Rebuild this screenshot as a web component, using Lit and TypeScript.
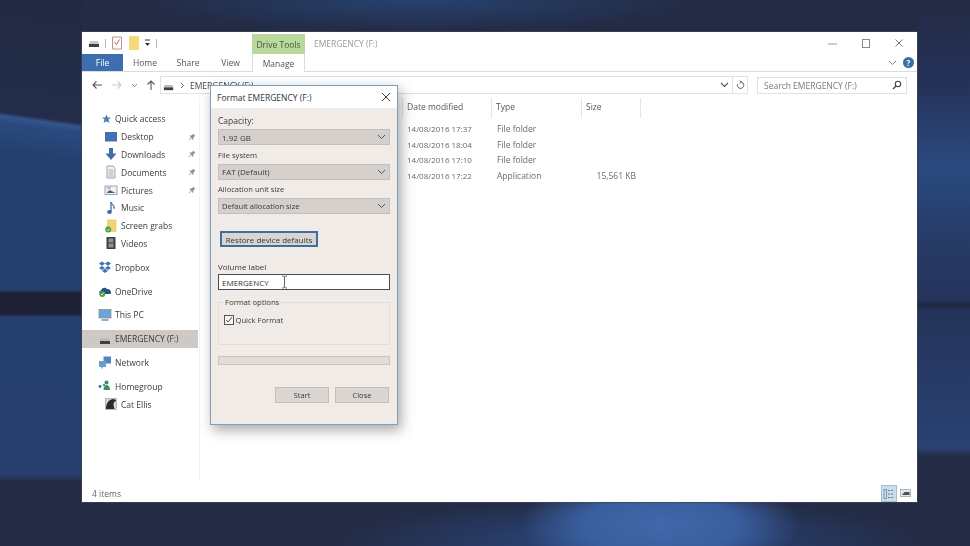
import { css, html, LitElement, svg } from "lit";
import { customElement } from "lit/decorators.js";

type NavItem = { label: string; icon: string; pin?: boolean; indent?: boolean; group?: boolean; selected?: boolean };

const NAV: NavItem[] = [
  { label: "Quick access", icon: "star" },
  { label: "Desktop", icon: "desktop", pin: true, indent: true },
  { label: "Downloads", icon: "download", pin: true, indent: true },
  { label: "Documents", icon: "docs", pin: true, indent: true },
  { label: "Pictures", icon: "pics", pin: true, indent: true },
  { label: "Music", icon: "music", indent: true },
  { label: "Screen grabs", icon: "grabs", indent: true },
  { label: "Videos", icon: "videos", indent: true },
  { label: "Dropbox", icon: "dropbox", group: true },
  { label: "OneDrive", icon: "onedrive", group: true },
  { label: "This PC", icon: "pc", group: true },
  { label: "EMERGENCY (F:)", icon: "drive", group: true, selected: true },
  { label: "Network", icon: "network", group: true },
  { label: "Homegroup", icon: "home", group: true },
  { label: "Cat Ellis", icon: "user", indent: true },
];

const FILES = [
  ["14/08/2016 17:37", "File folder", ""],
  ["14/08/2016 18:04", "File folder", ""],
  ["14/08/2016 17:10", "File folder", ""],
  ["14/08/2016 17:22", "Application", "15,561 KB"],
];

const ICONS: Record<string, unknown> = {
  star: svg`<path d="M8.500 2.500l1.300 3H13l-2.500 2.100L11.500 11 8.500 9.200 5.500 11l1-3.400L4 5.500h3.200z" fill="#4f7fae"/>`,
  desktop: svg`<rect x="1" y="2" width="12" height="9.500" fill="#5a6b80"/><rect x="2" y="3" width="10" height="7.500" fill="#3a74bc"/>`,
  download: svg`<path d="M5 1h4v5.500h3.500L7 13 1.500 6.500H5z" fill="#3f6fa8"/>`,
  docs: svg`<path d="M3 1h6l2 2.500V13H3z" fill="#f2f2f2" stroke="#8a8f96" stroke-width=".8"/><path d="M4.500 5h5M4.500 7h5M4.500 9h5M4.500 11h5" stroke="#9aa0a8" stroke-width=".8"/>`,
  pics: svg`<rect x="1" y="3" width="12" height="8.500" fill="#eef0f2" stroke="#8a929a" stroke-width=".8"/><path d="M2.500 10l3-3 6 3z" fill="#4b5f78"/><path d="M3 5h4" stroke="#7a8ea6"/>`,
  music: svg`<path d="M7 1v9.500" stroke="#3d6fa8" stroke-width="1.300" fill="none"/><path d="M7 1c.6 2.800 3.800 3.400 3.200 6.800" stroke="#3d6fa8" stroke-width="1.100" fill="none"/><ellipse cx="5.500" cy="11" rx="2.400" ry="2" fill="#3d6fa8"/>`,
  grabs: svg`<rect x="3.500" y="1" width="8.500" height="11.500" fill="#f3d36e" stroke="#d8ba5a" stroke-width=".5"/><circle cx="4.200" cy="10.600" r="3" fill="#4aa043"/><path d="M2.800 10.600l1.100 1.100 1.800-2" stroke="#fff" stroke-width=".8" fill="none"/>`,
  videos: svg`<rect x="2.500" y="1" width="9" height="12" fill="#3c3f44"/><rect x="4.500" y="2.500" width="5" height="4" fill="#8d9196"/><rect x="4.500" y="7.500" width="5" height="4" fill="#8d9196"/>`,
  dropbox: svg`<path d="M4 1.500L7 3.600 4 5.700 1 3.600zM10 1.500l3 2.100-3 2.100L7 3.600zM4 5.900L7 8 4 10.100 1 8zM10 5.900L13 8l-3 2.100L7 8zM4 10.800l3-2 3 2-3 2.100z" fill="#3f71ad"/>`,
  onedrive: svg`<path d="M3 10c-2 0-2.600-3 0-3.400C3.600 4 7 2.600 9 5c2.600-.6 5 2.600 3.600 5z" fill="#23537f"/><circle cx="4.300" cy="10" r="3" fill="#4aa043"/><path d="M3 10l1 1 1.700-1.900" stroke="#fff" stroke-width=".8" fill="none"/>`,
  pc: svg`<rect x="1" y="1.500" width="12" height="8.500" fill="#6fa4d6" stroke="#7c8996" stroke-width=".7"/><path d="M3.500 12h7" stroke="#7c8996" stroke-width="1.400"/>`,
  drive: svg`<path d="M3 6.500h8l1 2.500H2z" fill="#b9b9b9"/><rect x="2" y="9" width="10" height="3" fill="#3c3f44"/>`,
  network: svg`<rect x="5.500" y="1.500" width="7.500" height="7" fill="#4f87bd"/><rect x="1" y="6" width="7" height="6" fill="#6a9ccb"/><path d="M4 12v1.500" stroke="#4f6d8c"/>`,
  home: svg`<circle cx="2" cy="7.500" r="1.400" fill="#2e6ea8"/><circle cx="8.500" cy="3.500" r="2" fill="#3f8f5a"/><path d="M5.500 11c0-3.500 1.500-5 3-5s3.500 1.500 3.500 5z" fill="#3f8f5a"/><circle cx="6" cy="6" r="1.100" fill="#2e6ea8"/>`,
  user: svg`<rect x="1.500" y="1.500" width="11" height="11" fill="#d8d4d0" stroke="#8c8c8c" stroke-width=".5"/><path d="M2 12c0-5 2-9 7-10 2 0 3 1 3 2-3 1-3 3-1.500 8z" fill="#2c2a2a"/>`,
};

const icon = (name: string, size = 14) =>
  html`<svg class="ic" width=${size} height=${size} viewBox="0 0 14 14">${ICONS[name]}</svg>`;

const chevron = html`<svg width="9" height="6" viewBox="0 0 9 6"><path d="M1 1l3.500 3.500L8 1" fill="none" stroke="#555" stroke-width="1"/></svg>`;

@customElement("app-root")
export class AppRoot extends LitElement {
  static styles = css`
    :host {
      display: block;
      font-family: "Open Sans", "Liberation Sans", Arial, sans-serif;
      font-size: 8.5px;
      color: #3c3c3c;
    }
    * {
      box-sizing: border-box;
    }
    .ic {
      flex: none;
      display: block;
    }
    .desktop {
      position: relative;
      width: 970px;
      height: 546px;
      overflow: hidden;
      padding: 32px 53px 44px 82px;
      background:
        linear-gradient(180deg, transparent 290px, #1e2033 293px, #1e2033 314px, transparent 317px) 0 0 / 82px 546px no-repeat,
        linear-gradient(180deg, transparent 474px, #232b45 482px) 0 0 / 82px 546px no-repeat,
        linear-gradient(188deg, #222a42 0, #232d49 122px, #34548d 126px, #2a4a7f 132px, #24406f 160px, #233f6e 290px, #273f6c 480px) 0 0 / 82px 546px no-repeat,
        linear-gradient(180deg, #232a44 0, #24325a 85px, #2a4a80 168px, #263c68 235px, #25335a 300px, #20283f 305px, #25335a 311px, #28406f 430px, #2a4272 448px, #232b45 456px) 100% 0 / 53px 546px no-repeat,
        radial-gradient(ellipse 140px 52px at 660px 525px, #4168aa, #3a5f9f 55%, transparent),
        radial-gradient(ellipse 300px 50px at 630px 546px, #2b4a82, transparent),
        radial-gradient(ellipse 280px 32px at 420px 0, #26426f, transparent),
        #232b45;
    }
    .window {
      position: relative;
      width: 835px;
      height: 470px;
      background: #fff;
      display: flex;
      flex-direction: column;
      box-shadow: 0 0 1px 1px rgba(60, 68, 84, 0.75);
      filter: blur(0.35px);
    }
    .title {
      height: 22px;
      display: flex;
      align-items: center;
      flex: none;
    }
    .qat {
      width: 170px;
      display: flex;
      align-items: center;
      padding-left: 6px;
      gap: 4px;
    }
    .qat .sep {
      width: 1px;
      height: 9px;
      background: #b5b5b5;
      margin: 0 1px;
    }
    .qat .folder {
      margin-left: 2px;
    }
    .contextual {
      width: 53px;
      height: 20px;
      margin-top: 2px;
      background: #b9d89b;
      color: #4a5a3a;
      display: flex;
      align-items: center;
      justify-content: center;
    }
    .doc-title {
      margin-left: 9px;
      color: #9a9a9a;
      flex: 1;
    }
    .controls {
      display: flex;
      align-items: center;
      padding-right: 14px;
      gap: 25px;
    }
    .tabs {
      height: 18px;
      flex: none;
      display: flex;
      border-bottom: 1px solid #dcdcdc;
      color: #555;
    }
    .tab {
      display: flex;
      align-items: center;
      justify-content: center;
      height: 17px;
    }
    .tab.file {
      width: 41px;
      background: #3d6fb0;
      color: #fff;
    }
    .tab.home {
      width: 44px;
    }
    .tab.share {
      width: 42px;
    }
    .tab.view {
      width: 43px;
    }
    .tab.manage {
      width: 53px;
      height: 18px;
      background: #fff;
      border-left: 1px solid #dcdcdc;
      border-right: 1px solid #dcdcdc;
    }
    .spacer {
      flex: 1;
    }
    .ribbon-right {
      display: flex;
      align-items: center;
      gap: 6.500px;
      padding-right: 3px;
    }
    .help {
      width: 11px;
      height: 11px;
      border-radius: 50%;
      background: #3a6ea8;
      color: #fff;
      font-size: 8px;
      font-weight: 700;
      display: flex;
      align-items: center;
      justify-content: center;
    }
    .nav {
      height: 26px;
      flex: none;
      display: flex;
      align-items: center;
      padding-left: 9px;
      padding-right: 10px;
    }
    .nav-buttons {
      width: 69px;
      display: flex;
      align-items: center;
      gap: 8px;
    }
    .crumb {
      width: 573px;
      height: 18px;
      border: 1px solid #e2e2e2;
      display: flex;
      align-items: center;
      padding-left: 1px;
      gap: 5px;
      color: #444;
    }
    .crumb .path {
      flex: 1;
    }
    .crumb-end {
      padding-right: 3px;
    }
    .refresh {
      width: 15px;
      height: 18px;
      border: 1px solid #e2e2e2;
      border-left: none;
      display: flex;
      align-items: center;
      justify-content: center;
    }
    .search {
      margin-left: 9px;
      width: 150px;
      height: 17px;
      border: 1px solid #e0e0e0;
      display: flex;
      align-items: center;
      justify-content: space-between;
      padding: 0 4px 0 6px;
      color: #777;
    }
    .main {
      flex: 1;
      display: flex;
      min-height: 0;
    }
    .sidebar {
      width: 116px;
      flex: none;
      padding-top: 12px;
      margin-right: 1px;
    }
    .item {
      height: 17.800px;
      display: flex;
      align-items: center;
      padding-left: 16px;
      gap: 3px;
    }
    .item.indent {
      padding-left: 22px;
    }
    .item.group {
      margin-top: 6px;
    }
    .item.selected {
      background: #cfc9c5;
    }
    .item .label {
      flex: 1;
    }
    .pin {
      margin-right: 2px;
    }
    .list {
      flex: 1;
      border-left: 1px solid #f4f4f4;
    }
    .row {
      display: grid;
      grid-template-columns: 203px 89px 90px 59px;
      height: 15.600px;
      align-items: center;
    }
    .row.head {
      height: 23px;
      align-items: start;
      color: #555;
    }
    .row.head > div {
      height: 20px;
      border-right: 1px solid #e6e6e6;
      padding: 0 0 3px 4px;
      display: flex;
      align-items: center;
    }
    .row.cells > div {
      padding-left: 5px;
      color: #6a6a6a;
    }
    .row.cells .date {
      font-size: 8px;
      padding-left: 4px;
    }
    .row.cells .size {
      text-align: right;
      padding-right: 5px;
    }
    .status {
      height: 21px;
      flex: none;
      display: flex;
      align-items: flex-end;
      padding-left: 10px;
      color: #666;
    }
    .status-text {
      padding-bottom: 3px;
    }
    .views {
      margin-left: auto;
      display: flex;
      align-items: flex-end;
      gap: 3px;
      padding-right: 6px;
    }
    .view-on {
      width: 16px;
      height: 17px;
      background: #c6dfee;
      border: 1px solid #9fc0d4;
      display: flex;
      align-items: center;
      justify-content: center;
    }
    .view-thumb {
      margin-bottom: 5px;
    }
    .dialog {
      position: absolute;
      left: 128px;
      top: 53px;
      width: 188px;
      height: 340px;
      border: 1px solid #7ba1c2;
      background: #f0ebe6;
      box-shadow: 3px 5px 12px rgba(60, 60, 60, 0.45);
      display: flex;
      flex-direction: column;
      color: #3a3a3a;
    }
    .dialog-title {
      height: 22px;
      flex: none;
      background: #fff;
      display: flex;
      align-items: center;
      justify-content: space-between;
      padding: 0 6px;
      color: #333;
    }
    .dialog-body {
      padding: 0 7px;
      display: flex;
      flex-direction: column;
      font-size: 7.600px;
    }
    .field-label {
      height: 14px;
      display: flex;
      align-items: center;
      margin-top: 5px;
    }
    .field-label.capacity {
      font-size: 8.500px;
    }
    .combo {
      height: 16px;
      width: 172px;
      background: #d6d0cc;
      border: 1px solid #c4bfbb;
      display: flex;
      align-items: center;
      justify-content: space-between;
      padding: 0 3px;
      margin-top: 2px;
    }
    .combo + .field-label {
      margin-top: 2.500px;
    }
    .combo .strong {
      font-size: 8px;
    }
    .restore {
      margin-top: 17px;
      margin-left: 2px;
      width: 98px;
      height: 16px;
      background: #d9d5d3;
      border: 2px solid #3e6f9f;
      display: flex;
      align-items: center;
      justify-content: center;
      color: #333;
      font-size: 8px;
    }
    .volume-label {
      margin-top: 13px;
      height: 13px;
      display: flex;
      align-items: center;
      font-size: 8px;
    }
    .volume {
      position: relative;
      margin-top: 1px;
      height: 16px;
      width: 172px;
      background: #fff;
      border: 1.500px solid #4a4f55;
      display: flex;
      align-items: center;
      padding-left: 3px;
      color: #333;
      font-size: 8px;
    }
    .cursor {
      position: absolute;
      left: 62px;
      top: 0;
    }
    .fieldset {
      position: relative;
      margin-top: 12px;
      width: 172px;
      height: 43px;
      border: 1px solid #e1dcd8;
      padding: 12px 5px 0;
    }
    .legend {
      position: absolute;
      left: 5px;
      top: -6px;
      padding: 0 1px;
      background: #f0ebe6;
      line-height: 11px;
    }
    .check {
      display: flex;
      align-items: center;
      gap: 1.500px;
    }
    .box {
      width: 10px;
      height: 10px;
      border: 1px solid #555;
      background: #f7f5f3;
    }
    .progress {
      margin-top: 11px;
      height: 9px;
      width: 172px;
      background: #e2dcd8;
      border: 1px solid #c8c3bf;
    }
    .actions {
      margin-top: 22px;
      display: flex;
      gap: 6px;
      justify-content: flex-end;
      padding-right: 1px;
    }
    .btn {
      width: 54px;
      height: 16px;
      background: #dcd6d2;
      border: 1px solid #c4bfbb;
      display: flex;
      align-items: center;
      justify-content: center;
    }
  `;

  private renderNav(item: NavItem) {
    const cls = ["item", item.indent ? "indent" : "", item.group ? "group" : "", item.selected ? "selected" : ""].join(" ");
    return html`<div class=${cls}>
      ${icon(item.icon)}
      <span class="label">${item.label}</span>
      ${item.pin
        ? html`<svg class="pin" width="8" height="8" viewBox="0 0 8 8"><path d="M5 .5l2.500 2.500-1.300.5-1 1.500.3 1.500-1 .3L3.500 5 1 7.500 .7 7 3 4.500 1.800 3.300l.4-1 1.500.3 1-1z" fill="#8e9298"/></svg>`
        : ""}
    </div>`;
  }

  private renderDialog() {
    return html`<div class="dialog">
      <div class="dialog-title">
        <span>Format EMERGENCY (F:)</span>
        <svg width="10" height="10" viewBox="0 0 10 10"><path d="M1 1l8 8M9 1l-8 8" stroke="#444" stroke-width="1"/></svg>
      </div>
      <div class="dialog-body">
        <div class="field-label capacity">Capacity:</div>
        <div class="combo"><span class="strong">1.92 GB</span>${chevron}</div>
        <div class="field-label">File system</div>
        <div class="combo"><span class="strong">FAT (Default)</span>${chevron}</div>
        <div class="field-label">Allocation unit size</div>
        <div class="combo"><span>Default allocation size</span>${chevron}</div>
        <div class="restore">Restore device defaults</div>
        <div class="volume-label">Volume label</div>
        <div class="volume">
          EMERGENCY
          <svg class="cursor" width="7" height="14" viewBox="0 0 7 14"><path d="M1 1h1.500L3.500 2l1-1H6M3.500 2v10M1 13h1.500l1-1 1 1H6" fill="none" stroke="#555" stroke-width=".9"/></svg>
        </div>
        <div class="fieldset">
          <span class="legend">Format options</span>
          <div class="check">
            <svg class="box" viewBox="0 0 10 10"><path d="M1.500 5l2.500 2.500L8.500 1.500" fill="none" stroke="#333" stroke-width="1.100"/></svg>
            <span>Quick Format</span>
          </div>
        </div>
        <div class="progress"></div>
        <div class="actions">
          <div class="btn">Start</div>
          <div class="btn">Close</div>
        </div>
      </div>
    </div>`;
  }

  render() {
    return html`<div class="desktop">
      <div class="window">
        <div class="title">
          <div class="qat">
            <svg width="12" height="10" viewBox="0 0 12 10"><path d="M2 3h8l1 3H1z" fill="#c9c9c9"/><rect x="1" y="6" width="10" height="3" fill="#3c3f44"/></svg>
            <span class="sep"></span>
            <svg width="12" height="14" viewBox="0 0 12 14"><path d="M1.500 1h9v12h-9z" fill="#fff" stroke="#b89a8a"/><path d="M3.500 6l2 2.500 3-5" fill="none" stroke="#c2624a" stroke-width="1"/></svg>
            <svg class="folder" width="11" height="14" viewBox="0 0 11 14"><rect width="10" height="14" fill="#f6d97c"/></svg>
            <svg width="7" height="8" viewBox="0 0 7 8"><path d="M1 1h5" stroke="#333"/><path d="M1 4h5L3.500 7z" fill="#333"/></svg>
            <span class="sep"></span>
          </div>
          <div class="contextual">Drive Tools</div>
          <div class="doc-title">EMERGENCY (F:)</div>
          <div class="controls">
            <svg width="9" height="9" viewBox="0 0 9 9"><path d="M0 5h9" stroke="#999"/></svg>
            <svg width="8" height="9" viewBox="0 0 8 9"><rect x=".5" y=".5" width="7" height="8" fill="none" stroke="#888"/></svg>
            <svg width="8" height="8" viewBox="0 0 8 8"><path d="M.5 .5l7 7M7.500 .5l-7 7" stroke="#777"/></svg>
          </div>
        </div>
        <div class="tabs">
          <div class="tab file">File</div>
          <div class="tab home">Home</div>
          <div class="tab share">Share</div>
          <div class="tab view">View</div>
          <div class="tab manage">Manage</div>
          <div class="spacer"></div>
          <div class="ribbon-right">
            <svg width="9" height="6" viewBox="0 0 9 6"><path d="M1 1l3.500 3.500L8 1" fill="none" stroke="#888"/></svg>
            <div class="help">?</div>
          </div>
        </div>
        <div class="nav">
          <div class="nav-buttons">
            <svg width="12" height="10" viewBox="0 0 12 10"><path d="M11 5H2M5.500 1.500L2 5l3.500 3.500" fill="none" stroke="#555" stroke-width="1.100"/></svg>
            <svg width="12" height="10" viewBox="0 0 12 10"><path d="M1 5h9M6.500 1.500L10 5 6.500 8.500" fill="none" stroke="#ccc" stroke-width="1.100"/></svg>
            <svg width="7" height="5" viewBox="0 0 7 5"><path d="M1 1l2.500 2.500L6 1" fill="none" stroke="#888"/></svg>
            <svg width="10" height="12" viewBox="0 0 10 12"><path d="M5 11V2M1.500 5.500L5 2l3.500 3.500" fill="none" stroke="#555" stroke-width="1.100"/></svg>
          </div>
          <div class="crumb">
            ${icon("drive", 13)}
            <svg width="5" height="7" viewBox="0 0 5 7"><path d="M1 1l2.500 2.500L1 6" fill="none" stroke="#666"/></svg>
            <span class="path">EMERGENCY (F:)</span>
            <svg class="crumb-end" width="12" height="6" viewBox="0 0 9 6"><path d="M1 1l3.500 3.500L8 1" fill="none" stroke="#555" stroke-width="1.100"/></svg>
          </div>
          <div class="refresh">
            <svg width="9" height="10" viewBox="0 0 9 10"><path d="M4.500 2a3.200 3.200 0 1 1-3 2.200M4 .5L5.500 2 4 3.500" fill="none" stroke="#555"/></svg>
          </div>
          <div class="search">
            <span>Search EMERGENCY (F:)</span>
            <svg width="10" height="10" viewBox="0 0 10 10"><circle cx="6" cy="4" r="2.700" fill="none" stroke="#444" stroke-width="1.100"/><path d="M4 6L1 9" stroke="#444" stroke-width="1.300"/></svg>
          </div>
        </div>
        <div class="main">
          <div class="sidebar">${NAV.map((n) => this.renderNav(n))}</div>
          <div class="list">
            <div class="row head">
              <div></div>
              <div>Date modified</div>
              <div>Type</div>
              <div>Size</div>
            </div>
            ${FILES.map(
              ([date, type, size]) => html`<div class="row cells">
                <div></div>
                <div class="date">${date}</div>
                <div>${type}</div>
                <div class="size">${size}</div>
              </div>`
            )}
          </div>
        </div>
        <div class="status">
          <span class="status-text">4 items</span>
          <div class="views">
            <div class="view-on">
              <svg width="12" height="12" viewBox="0 0 12 12"><path d="M5 2.500h6M5 6h6M5 9.500h6" stroke="#6a7680" stroke-dasharray="2 1"/><rect x="1" y="1.500" width="2.500" height="9" fill="none" stroke="#8a949c"/></svg>
            </div>
            <svg class="view-thumb" width="11" height="8" viewBox="0 0 11 8"><rect x=".5" y=".5" width="10" height="7" fill="#e6e6e6" stroke="#b5b5b5"/><path d="M2 6l2.500-3h5v3z" fill="#4a5058"/></svg>
          </div>
        </div>
        ${this.renderDialog()}
      </div>
    </div>`;
  }
}
